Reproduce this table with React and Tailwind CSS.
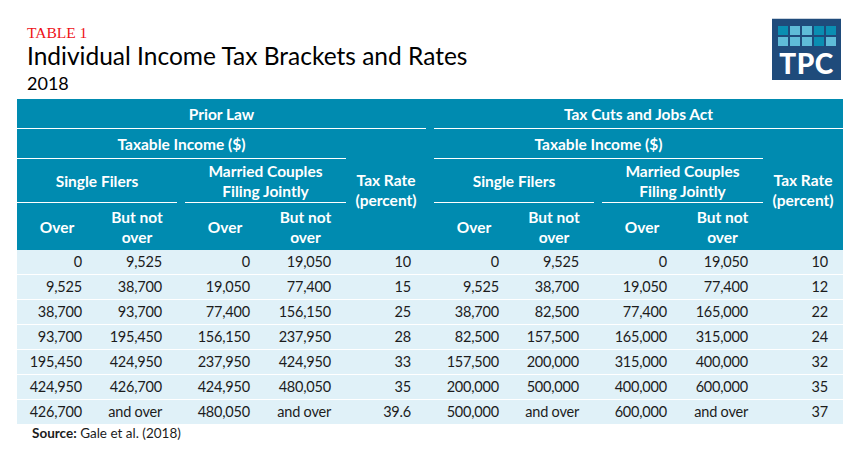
import React from 'react';

const HEAD = 'bg-[#008bb0]';
const font = { fontFamily: 'Lato, "Noto Sans", sans-serif' };

const prior = [
  ['0', '9,525', '0', '19,050', '10'],
  ['9,525', '38,700', '19,050', '77,400', '15'],
  ['38,700', '93,700', '77,400', '156,150', '25'],
  ['93,700', '195,450', '156,150', '237,950', '28'],
  ['195,450', '424,950', '237,950', '424,950', '33'],
  ['424,950', '426,700', '424,950', '480,050', '35'],
  ['426,700', 'and over', '480,050', 'and over', '39.6'],
];

const tcja = [
  ['0', '9,525', '0', '19,050', '10'],
  ['9,525', '38,700', '19,050', '77,400', '12'],
  ['38,700', '82,500', '77,400', '165,000', '22'],
  ['82,500', '157,500', '165,000', '315,000', '24'],
  ['157,500', '200,000', '315,000', '400,000', '32'],
  ['200,000', '500,000', '400,000', '600,000', '35'],
  ['500,000', 'and over', '600,000', 'and over', '37'],
];

// squares of the logo, d = dark teal, l = light
const squares = ['d', 'l', 'l', 'd', 'd', 'l', 'l', 'l', 'd', 'l'];

function Logo() {
  return (
    <div className="mt-[18px] w-[69px] h-[62px] bg-[#1f4b7b] border-t border-[#c9d3de] flex flex-col items-center pt-[7px]">
      <div className="grid grid-cols-[repeat(5,10px)] grid-rows-[9px_9px] gap-x-[2px] gap-y-[2px]">
        {squares.map((s, i) => (
          <div key={i} className={s === 'd' ? 'bg-[#0a8eb2]' : 'bg-[#5fbcd8]'} />
        ))}
      </div>
      <div className="text-white font-black text-[28px] leading-none mt-[3px] tracking-[0.5px]" style={font}>
        TPC
      </div>
    </div>
  );
}

function HeaderHalf({ title }) {
  const line = 'border-b border-white';
  return (
    <div className="grid grid-cols-[80px_80px_8px_80px_81px_80px] grid-rows-[30px_30px_44px_47px] text-white font-bold text-[15.5px] leading-[20px]">
      <div className={`col-span-6 flex items-center justify-center ${line}`}>{title}</div>
      <div className={`col-span-5 flex items-center justify-center ${line}`}>Taxable Income ($)</div>
      <div className="col-start-6 row-start-2 row-span-3 flex items-center justify-center text-center">
        Tax Rate
        <br />
        (percent)
      </div>
      <div className={`col-span-2 flex items-center justify-center ${line}`}>Single Filers</div>
      <div />
      <div className={`col-span-2 flex items-center justify-center text-center ${line}`}>
        Married Couples
        <br />
        Filing Jointly
      </div>
      <div className="flex items-center justify-center">Over</div>
      <div className="flex items-center justify-center text-center">
        But not
        <br />
        over
      </div>
      <div />
      <div className="flex items-center justify-center">Over</div>
      <div className="flex items-center justify-center text-center">
        But not
        <br />
        over
      </div>
    </div>
  );
}

function Cells({ row }) {
  return (
    <>
      <div className="pr-[15px] text-right">{row[0]}</div>
      <div className="pr-[15px] text-right">{row[1]}</div>
      <div />
      <div className="pr-[15px] text-right">{row[2]}</div>
      <div className="pr-[15px] text-right">{row[3]}</div>
      <div className="pr-[15px] text-right">{row[4]}</div>
    </>
  );
}

export default function App() {
  return (
    <div className="w-[866px] h-[455px] bg-white overflow-hidden" style={font}>
      {/* Title */}
      <div className="h-[99px] flex justify-between pl-[27px] pr-[25px]">
        <div className="flex flex-col pt-[25px]">
          <div className="text-[#ee1118] text-[15.5px] leading-[16px]" style={{ fontFamily: '"Liberation Serif", serif' }}>
            TABLE 1
          </div>
          <div className="text-black text-[24.5px] leading-[24px] mt-[3px]">Individual Income Tax Brackets and Rates</div>
          <div className="text-black text-[18px] leading-[18px] mt-[6px]">2018</div>
        </div>
        <Logo />
      </div>

      {/* Table */}
      <div className="ml-[17px] w-[826px]">
        <div className={`flex gap-[8px] ${HEAD}`}>
          <HeaderHalf title="Prior Law" />
          <HeaderHalf title="Tax Cuts and Jobs Act" />
        </div>
        <div className="bg-[#e0f1f8] text-[#1c1c1c] text-[14.5px] tracking-[-0.2px]">
          {prior.map((row, i) => (
            <div
              key={i}
              className={`grid grid-cols-[80px_80px_8px_80px_81px_80px_8px_80px_80px_8px_80px_81px_80px] items-center ${
                i < prior.length - 1 ? 'h-[25px] border-b border-white' : 'h-[24px]'
              }`}
            >
              <Cells row={row} />
              <div />
              <Cells row={tcja[i]} />
            </div>
          ))}
        </div>
      </div>

      {/* Source */}
      <div className="pl-[32px] mt-[1px] text-[13.5px] leading-[16px] text-[#1c1c1c]">
        <span className="font-bold">Source:</span> Gale et al. (2018)
      </div>
    </div>
  );
}
